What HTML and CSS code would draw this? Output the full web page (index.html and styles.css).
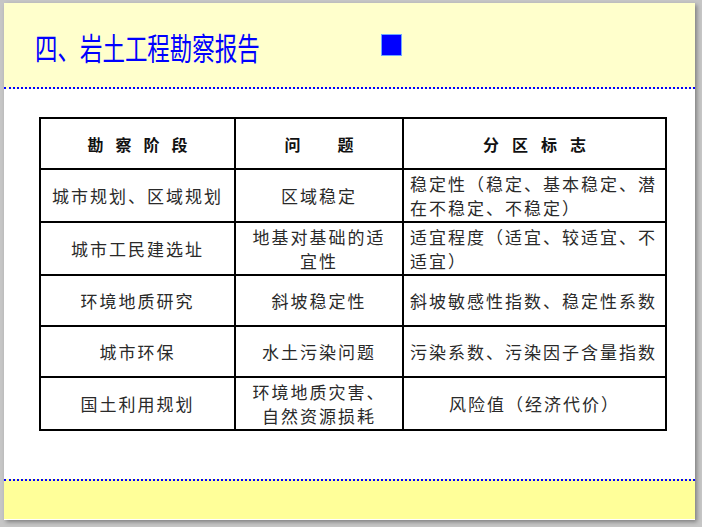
FILE: index.html
```html
<!DOCTYPE html>
<html lang="zh">
<head>
<meta charset="utf-8">
<link rel="stylesheet" href="styles.css">
</head>
<body>
<div class="slide">
  <header class="top">
    <h1 class="title"><span class="title-text">四、岩土工程勘察报告</span><span class="square"></span></h1>
  </header>
  <main class="content">
    <table class="grid">
      <colgroup>
        <col class="c1"><col class="c2"><col class="c3">
      </colgroup>
      <tr class="head">
        <th><span class="h1">勘察阶段</span></th>
        <th><span class="h2">问题</span></th>
        <th><span class="h3">分区标志</span></th>
      </tr>
      <tr class="r53">
        <td>城市规划、区域规划</td>
        <td>区域稳定</td>
        <td class="left">稳定性（稳定、基本稳定、潜<br>在不稳定、不稳定）</td>
      </tr>
      <tr class="r53">
        <td>城市工民建选址</td>
        <td>地基对基础的适<br>宜性</td>
        <td class="left">适宜程度（适宜、较适宜、不<br>适宜）</td>
      </tr>
      <tr class="r51">
        <td>环境地质研究</td>
        <td>斜坡稳定性</td>
        <td class="left">斜坡敏感性指数、稳定性系数</td>
      </tr>
      <tr class="r51">
        <td>城市环保</td>
        <td>水土污染问题</td>
        <td class="left">污染系数、污染因子含量指数</td>
      </tr>
      <tr class="r53">
        <td>国土利用规划</td>
        <td>环境地质灾害、<br>自然资源损耗</td>
        <td>风险值（经济代价）</td>
      </tr>
    </table>
  </main>
  <footer class="bottom"></footer>
</div>
</body>
</html>
```

FILE: styles.css
```css
html, body {
  margin: 0;
  padding: 0;
}
body {
  width: 702px;
  height: 527px;
  background: #c6c6c6;
  padding: 3px 0 0 4px;
  box-sizing: border-box;
  overflow: hidden;
  font-family: "Noto Sans CJK SC", "Noto Sans", sans-serif;
}
.slide {
  width: 691px;
  height: 517px;
  background: #fff;
  display: flex;
  flex-direction: column;
  box-shadow: 2px 2px 4px rgba(0, 0, 0, 0.35);
}
.top {
  height: 84px;
  background: #ffffcc;
  border-bottom: 2px dotted #0000ff;
  box-sizing: content-box;
}
.title {
  margin: 0;
  padding: 28px 0 0 31px;
  font-weight: normal;
  font-size: 31px;
  line-height: 31px;
  color: #0000ff;
  display: flex;
  align-items: flex-start;
  white-space: nowrap;
}
.title-text {
  display: inline-block;
  width: 310px;
  transform: scaleX(0.725);
  transform-origin: left center;
}
.square {
  display: inline-block;
  width: 21px;
  height: 22px;
  margin: 3px 0 0 36px;
  background: #0000ff;
  box-shadow: 0 0 0 1px #6fa8ff inset;
}
.content {
  flex: 1;
  padding: 28px 0 0 35px;
}
.grid {
  border-collapse: collapse;
  table-layout: fixed;
  width: 626px;
  color: #2a2a2a;
  font-size: 17px;
  line-height: 24px;
  letter-spacing: 2px;
}
.c1 { width: 195px; }
.c2 { width: 168px; }
.c3 { width: 263px; }
.grid th, .grid td {
  border: 2px solid #000;
  padding: 0 2px;
  text-align: center;
  vertical-align: middle;
  white-space: nowrap;
}
.grid td.left {
  text-align: left;
  padding-left: 6px;
}
.head { height: 51px; }
.r53 { height: 53px; }
.r51 { height: 51px; }
.grid th {
  font-size: 16px;
  font-weight: bold;
  color: #111;
}
.h1 { letter-spacing: 12px; padding-left: 12px; }
.h2 { letter-spacing: 37px; padding-left: 37px; }
.h3 { letter-spacing: 13px; padding-left: 13px; }
.bottom {
  height: 38px;
  background: #ffff99;
  border-top: 2px dotted #0000ff;
  border-bottom: 1px solid #fff;
}
```
